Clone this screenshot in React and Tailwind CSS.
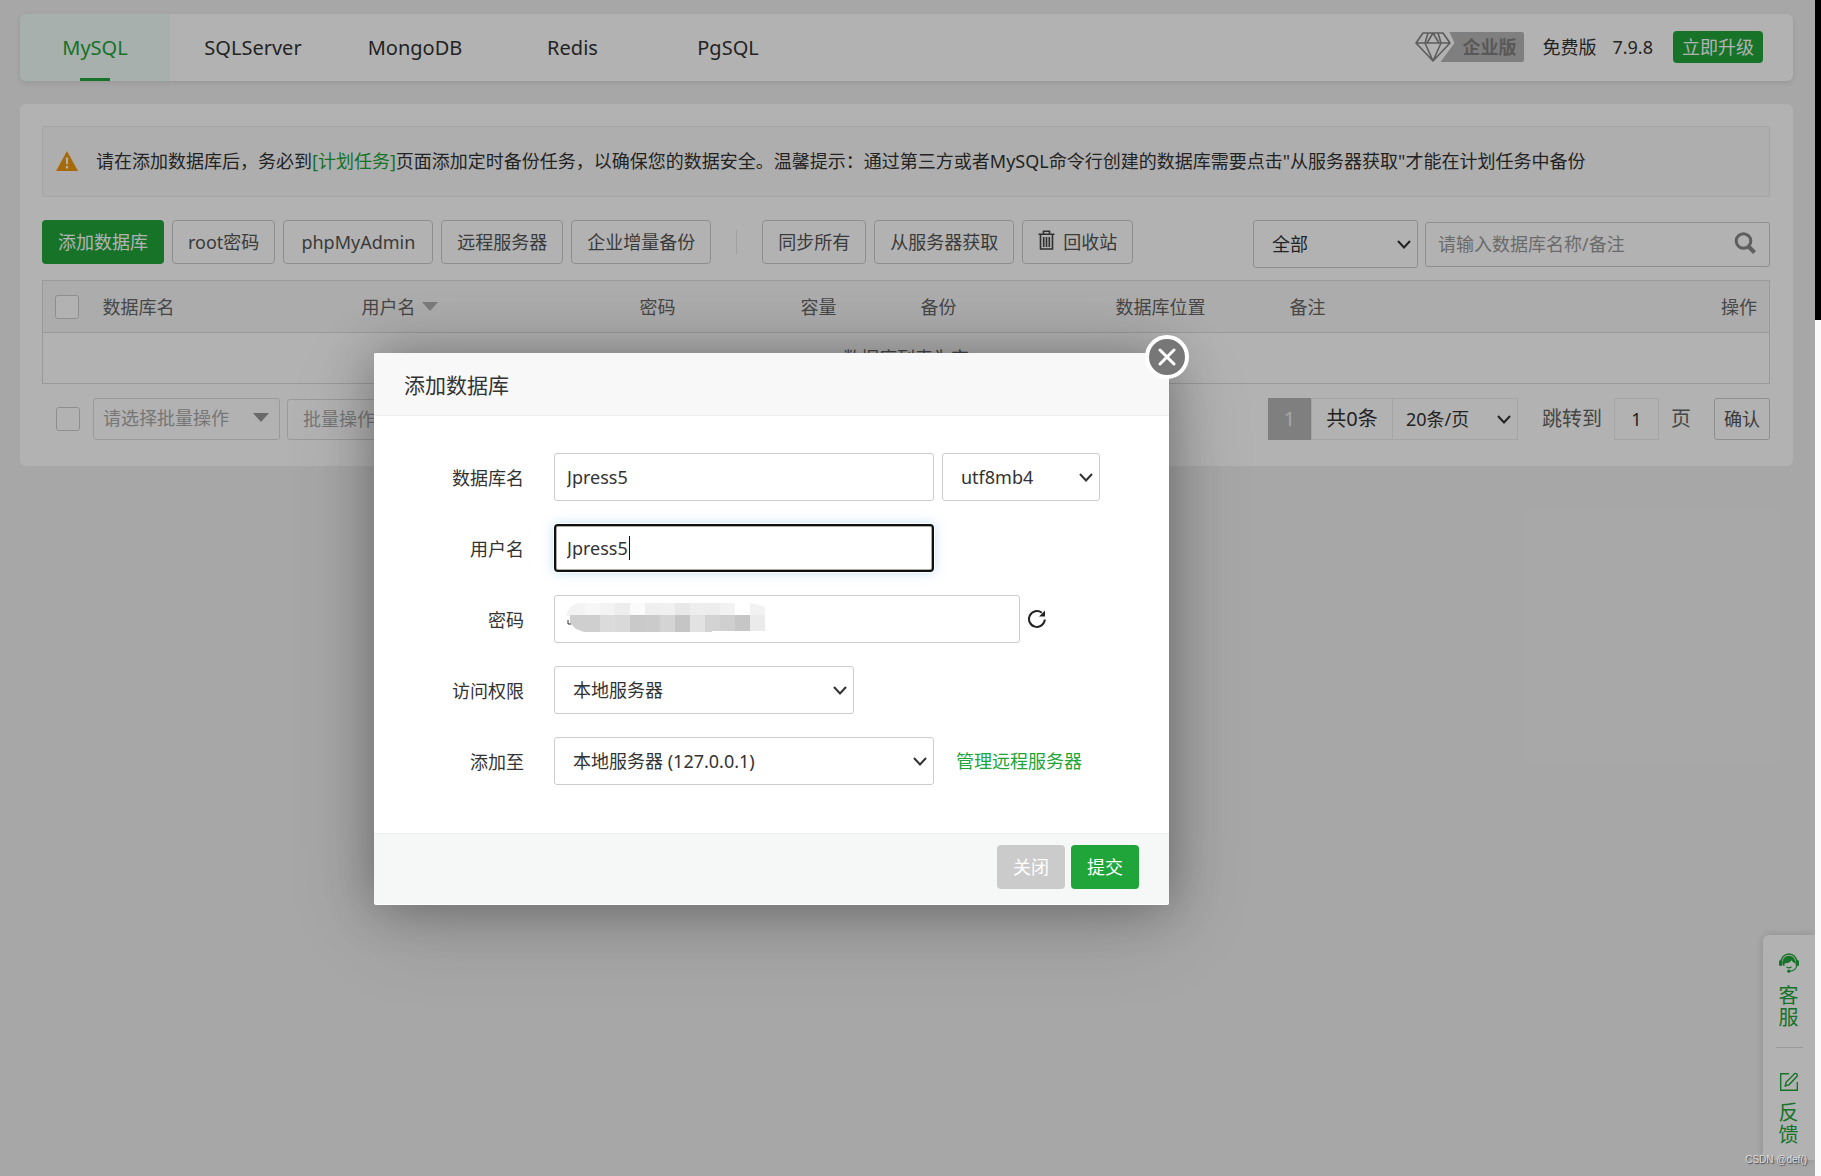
import React, { useState } from "react";

const TABS = [
  { name: "MySQL", width: "w-[150px]" },
  { name: "SQLServer", width: "w-[166px]" },
  { name: "MongoDB", width: "w-[158px]" },
  { name: "Redis", width: "w-[157px]" },
  { name: "PgSQL", width: "w-[154px]" },
];

const MOSAIC_TOP = ["#f3f3f3", "#f7f7f7", "#f3f3f3", "#ededed", "#fbfbfb", "#efefef", "#f0f0f0", "#e8e8e8", "#eeeeee", "#ededed", "#f2f2f2", "#ffffff", "#f2f2f2"];
const MOSAIC_BOTTOM = ["#cfcfcf", "#dbdbdb", "#d9d9d9", "#c9c9c9", "#cbcbcb", "#d4d4d4", "#c5c5c5", "#e2e2e2", "#d3d3d3", "#cfcfcf", "#c6c6c6", "#ebebeb"];

const Chevron = () => (
  <svg viewBox="0 0 14 9" className="pointer-events-none absolute right-[7px] top-1/2 -mt-1 h-[9px] w-[14px]" fill="none" stroke="#333" strokeWidth="2">
    <path d="M1 1l6 6.5L13 1" />
  </svg>
);

const Caret = ({ className }) => (
  <svg viewBox="0 0 16 9" className={"h-[9px] w-4 " + className} fill="currentColor">
    <path d="M0 0h16L8 9z" />
  </svg>
);

const Select = ({ id, label, options, className }) => (
  <div className={"relative shrink-0 " + className}>
    <select
      id={id}
      aria-label={label}
      className="h-full w-full appearance-none rounded-[3px] border border-[#ccc] bg-white pl-[18px] text-[#333]"
    >
      {options.map((item) => (
        <option key={item}>{item}</option>
      ))}
    </select>
    <Chevron />
  </div>
);

const ToolButton = ({ children, className = "" }) => (
  <button className={"flex h-11 items-center justify-center rounded border border-[#ccc] bg-white px-[15px] whitespace-nowrap text-[#555] " + className}>
    {children}
  </button>
);

const Checkbox = ({ label }) => (
  <input type="checkbox" aria-label={label} className="block h-6 w-6 shrink-0 appearance-none rounded-[3px] border border-[#ccc] bg-white" />
);

const TrashIcon = () => (
  <svg viewBox="0 0 16 20" className="mr-2 mb-1 h-5 w-[17px]" fill="none" stroke="#444" strokeWidth="1.6">
    <path d="M0 4.2h16M5 4V1.2h6V4M2 4.5V19h12V4.5M5.2 7v10M8 7v10M10.8 7v10" />
  </svg>
);

const Header = () => (
  <header className="flex h-[67px] items-center rounded-md bg-white shadow-[0_2px_6px_rgba(0,0,0,0.1)]">
    <nav className="flex h-full flex-1">
      {TABS.map((tab, i) => (
        <a
          key={tab.name}
          href="#"
          className={
            "relative flex h-full items-center justify-center text-xl " +
            tab.width +
            (i === 0 ? " rounded-l-md bg-[#f0fdf6] text-[#20a53a]" : " text-[#333]")
          }
        >
          {tab.name}
          {i === 0 && <span className="absolute bottom-0 left-1/2 -ml-[15px] h-[3px] w-[30px] bg-[#20a53a]" />}
        </a>
      ))}
    </nav>
    <div className="flex items-center pr-[30px] pb-px text-[#333]">
      <svg viewBox="0 0 36 30" className="h-[30px] w-9" fill="none" stroke="#858585" strokeWidth="1.6" strokeLinejoin="round">
        <path d="M8 1h20l7 10L18 29 1 11zM1 11h34M13 1l-3 10 8 18 8-18-3-10M18 1l-6 10M18 1l6 10" />
      </svg>
      <span className="-ml-[11px] flex h-[30px] w-[84px] items-center justify-end rounded-xs bg-[#b7b7b7] pr-[8px] font-bold text-[#7f7f7f] [clip-path:polygon(9px_0,100%_0,100%_100%,0_100%,14px_11px)]">
        企业版
      </span>
      <span className="ml-[18px]">免费版</span>
      <span className="ml-4">7.9.8</span>
      <button className="ml-[20px] flex h-8 w-[90px] items-center justify-center rounded bg-[#20a53a] text-white">立即升级</button>
    </div>
  </header>
);

const Notice = () => (
  <div className="flex h-[71px] items-center rounded-xs border border-[#ebebeb] bg-[#fafafa] pb-px pl-[13px] text-[#333]">
    <svg viewBox="0 0 22 20" className="mr-[18px] h-5 w-[22px]">
      <path d="M11 0l11 20H0z" fill="#f0990f" />
      <path d="M9.8 6.5h2.4l-.4 7h-1.6zM9.9 15h2.2v2.4H9.9z" fill="#fff" />
    </svg>
    <p className="whitespace-nowrap">
      请在添加数据库后，务必到
      <a href="#" className="text-[#20a53a]">[计划任务]</a>
      页面添加定时备份任务，以确保您的数据安全。温馨提示：通过第三方或者MySQL命令行创建的数据库需要点击"从服务器获取"才能在计划任务中备份
    </p>
  </div>
);

const Toolbar = () => (
  <div className="mt-[23px] flex items-start">
    <div className="flex flex-1 gap-2">
      <button className="h-11 rounded bg-[#20a53a] px-4 text-white">添加数据库</button>
      <ToolButton>root密码</ToolButton>
      <ToolButton className="min-w-[150px]">phpMyAdmin</ToolButton>
      <ToolButton>远程服务器</ToolButton>
      <ToolButton>企业增量备份</ToolButton>
      <span className="mx-[17px] mt-[10px] h-6 w-px bg-[#e6e6e6]" />
      <ToolButton>同步所有</ToolButton>
      <ToolButton>从服务器获取</ToolButton>
      <ToolButton>
        <TrashIcon />
        回收站
      </ToolButton>
    </div>
    <Select label="数据库类型" options={["全部"]} className="h-12 w-[165px]" />
    <div className="relative ml-[7px] self-center">
      <input
        type="text"
        aria-label="搜索数据库"
        placeholder="请输入数据库名称/备注"
        className="block h-[45px] w-[345px] rounded-[3px] border border-[#ccc] bg-white px-3 placeholder:text-[#999]"
      />
      <svg viewBox="0 0 22 22" className="absolute top-[10px] right-[14px] h-[22px] w-[22px]" fill="none" stroke="#888">
        <circle cx="9.5" cy="9" r="7.3" strokeWidth="3" />
        <path d="M14.5 14.5l6 6" strokeWidth="4" />
      </svg>
    </div>
  </div>
);

const DatabaseTable = () => (
  <table className="mt-3 w-full table-fixed border border-[#ddd] text-[#666]">
    <thead>
      <tr className="h-[52px] bg-[#f6f6f6] text-left [&>th]:pl-[10px] [&>th]:font-normal">
        <th className="w-[50px]">
          <div className="pl-[2px]">
            <Checkbox label="全选" />
          </div>
        </th>
        <th className="w-[259px]">数据库名</th>
        <th className="w-[278px]">
          <span className="flex items-center gap-[6px]">
            用户名
            <Caret className="text-[#b0b0b0]" />
          </span>
        </th>
        <th className="w-[161px]">密码</th>
        <th className="w-[120px]">容量</th>
        <th className="w-[195px]">备份</th>
        <th className="w-[174px]">数据库位置</th>
        <th>备注</th>
        <th className="pr-3 text-right">操作</th>
      </tr>
    </thead>
    <tbody>
      <tr className="h-[51px] border-t border-[#ddd]">
        <td colSpan={9} className="text-center">数据库列表为空</td>
      </tr>
    </tbody>
  </table>
);

const TableFooter = () => (
  <div className="mt-[14px] flex items-start">
    <div className="flex h-[42px] flex-1 items-center pl-[14px]">
      <Checkbox label="选择全部" />
      <div className="relative ml-[13px] h-[42px] w-[187px]">
        <select aria-label="批量操作" className="h-full w-full appearance-none rounded-[3px] border border-[#ddd] bg-white pb-[2px] pl-[9px] text-[#aaa]">
          <option>请选择批量操作</option>
        </select>
        <Caret className="pointer-events-none absolute top-[15px] right-[11px] text-[#999]" />
      </div>
      <button className="ml-[7px] h-[41px] rounded-[3px] border border-[#ddd] px-[15px] text-[#aaa]">批量操作</button>
    </div>
    <div className="flex h-[42px] items-center text-[#333]">
      <span className="flex h-full w-[43px] items-center justify-center bg-[#b7b7b7] text-xl text-[#eee]">1</span>
      <span className="flex h-full w-[82px] items-center justify-center border border-[#ececec] text-xl">共0条</span>
      <div className="relative -ml-px h-full w-[126px]">
        <select aria-label="每页条数" className="h-full w-full appearance-none border border-[#ececec] bg-white pl-[13px]">
          <option>20条/页</option>
        </select>
        <Chevron />
      </div>
      <label htmlFor="jump" className="ml-6 text-xl text-[#666]">跳转到</label>
      <input id="jump" type="text" defaultValue="1" className="ml-3 h-full w-[45px] border border-[#ececec] bg-white text-center" />
      <span className="ml-3 text-xl text-[#666]">页</span>
      <button className="ml-[23px] h-full rounded-[3px] border border-[#ccc] px-[9px] text-[#555]">确认</button>
    </div>
  </div>
);

const SideBar = () => (
  <aside className="absolute right-0 bottom-4 flex h-[225px] w-[52px] flex-col items-center rounded-l-md bg-white text-xl leading-[22px] text-[#20a53a] shadow-[0_0_8px_rgba(0,0,0,0.15)]">
    <a href="#" className="flex flex-col items-center pt-[18px] pr-px">
      <svg viewBox="0 0 20 20" className="mb-3 h-5 w-5" fill="none" stroke="currentColor">
        <path d="M2.2 9a7.8 8 0 0 1 15.6 0" strokeWidth="1.4" />
        <path d="M3.5 10.5C3.5 5 6.5 2.8 10 2.8s6.5 2.2 6.5 7.7C14 9.6 13.5 8.5 12.8 7.2 11 9.6 8 10.5 5.5 10.5V13C4 13 3.5 12 3.5 10.5z" fill="currentColor" stroke="none" />
        <rect x="0" y="7" width="3.4" height="6" rx="1.5" fill="currentColor" stroke="none" />
        <rect x="16.6" y="7" width="3.4" height="6" rx="1.5" fill="currentColor" stroke="none" />
        <path d="M17.8 12.5c-.6 3.5-3.6 5.500-7.300 5.700M7.500 13.800c1.500 1.300 3.500 1.300 5 0" strokeWidth="1.2" />
        <circle cx="9.8" cy="18.2" r="1.6" fill="currentColor" stroke="none" />
      </svg>
      <span className="w-5">客服</span>
    </a>
    <span className="mt-[18px] h-px w-[27px] shrink-0 bg-[#ddd]" />
    <a href="#" className="flex flex-col items-center pt-6 pr-px">
      <svg viewBox="0 0 20 20" className="mb-[10px] h-5 w-5" fill="none" stroke="currentColor" strokeWidth="1.4">
        <path d="M10 1.7H1.7v16.6h16.6V10" />
        <path d="M6.2 14l1-4 8.3-8.3c1.8-1 3.6.8 2.6 2.6L10 12.8z" />
      </svg>
      <span className="w-5">反馈</span>
    </a>
  </aside>
);

const FormRow = ({ label, htmlFor, children }) => (
  <div className="flex h-12 items-center">
    <label htmlFor={htmlFor} className="w-[150px] shrink-0 pt-px text-right">{label}</label>
    <div className="ml-[30px] flex items-center">{children}</div>
  </div>
);

const AddDatabaseModal = () => {
  const [name, setName] = useState("Jpress5");
  const [username, setUsername] = useState("Jpress5");

  return (
    <section
      role="dialog"
      aria-labelledby="modal-title"
      className="relative w-[795px] rounded-xs bg-white pb-px text-[#333] shadow-[1px_1px_50px_rgba(0,0,0,0.3),0_20px_90px_rgba(0,0,0,0.15)]"
    >
      <h2 id="modal-title" className="flex h-[63px] items-center rounded-t-xs border-b border-[#eee] bg-[#f8f8f8] pt-[2px] pl-[30px] text-[21px]">
        添加数据库
      </h2>
      <button
        aria-label="关闭窗口"
        className="absolute -top-[18px] -right-[20px] flex h-11 w-11 items-center justify-center rounded-full border-4 border-white bg-[#777]"
      >
        <svg viewBox="0 0 18 18" className="h-[18px] w-[18px]" stroke="#fff" strokeWidth="3" strokeLinecap="round">
          <path d="M2 2l14 14M16 2L2 16" />
        </svg>
      </button>

      <form className="flex flex-col gap-[23px] pt-[37px] pb-12">
        <FormRow label="数据库名" htmlFor="db-name">
          <input
            id="db-name"
            type="text"
            value={name}
            onChange={(e) => setName(e.target.value)}
            className="h-12 w-[380px] rounded-[3px] border border-[#ccc] px-3"
          />
          <Select label="编码" options={["utf8mb4"]} className="ml-2 h-12 w-[158px]" />
        </FormRow>

        <FormRow label="用户名" htmlFor="db-user">
          <div className="relative">
            <input
              id="db-user"
              type="text"
              value={username}
              onChange={(e) => setUsername(e.target.value)}
              className="block h-12 w-[380px] rounded border-2 border-[#101010] px-[11px] shadow-[inset_0_0_0_1px_#aaa,0_0_0_1px_#fff,0_0_12px_rgba(102,175,233,0.45)] outline-none"
            />
            <span className="absolute top-3 left-[75px] h-6 w-px bg-[#111]" />
          </div>
        </FormRow>

        <FormRow label="密码" htmlFor="db-pass">
          <div className="relative">
            <input id="db-pass" type="password" className="block h-12 w-[466px] rounded-[3px] border border-[#ccc] px-3" />
            <svg viewBox="0 0 200 30" className="pointer-events-none absolute top-2 left-3 h-[30px] w-[200px]">
              <clipPath id="smudge">
                <path d="M12 0h173l14 4v24h-53v1H18L10 26 4 20 0 12 4 4z" />
              </clipPath>
              <g clipPath="url(#smudge)" shapeRendering="crispEdges">
                {MOSAIC_TOP.map((color, i) => (
                  <rect key={i} x={i === 0 ? 0 : i * 15 + 4} y="0" width={i === 0 ? 19 : 15} height="13" fill={color} />
                ))}
                {MOSAIC_BOTTOM.map((color, i) => (
                  <rect key={i} x={i === 0 ? 4 : i * 15 + 19} y="12" width={i === 0 ? 30 : 15} height="17" fill={color} />
                ))}
              </g>
              <path d="M2 17v4h3" fill="none" stroke="#333" />
            </svg>
          </div>
          <button type="button" aria-label="随机密码" className="ml-2">
            <svg viewBox="0 0 18 18" className="h-[18px] w-[18px]" fill="none" stroke="#222" strokeWidth="2">
              <path d="M16.8 9.5A7.9 7.9 0 1 1 13.8 2.8" />
              <path d="M17 .5v6h-6z" fill="#222" stroke="none" />
            </svg>
          </button>
        </FormRow>

        <FormRow label="访问权限" htmlFor="db-access">
          <Select id="db-access" options={["本地服务器"]} className="h-12 w-[300px]" />
        </FormRow>

        <FormRow label="添加至" htmlFor="db-server">
          <Select id="db-server" options={["本地服务器 (127.0.0.1)"]} className="h-12 w-[380px]" />
          <a href="#" className="ml-[22px] text-[#20a53a]">管理远程服务器</a>
        </FormRow>
      </form>

      <div className="flex h-[71px] items-center justify-end gap-[6px] border-t border-[#eef0f0] bg-[#f6f8f8] pr-[30px] pb-1">
        <button className="h-11 w-[68px] rounded bg-[#cbcbcb] text-white">关闭</button>
        <button className="h-11 w-[68px] rounded bg-[#20a53a] text-white">提交</button>
      </div>
    </section>
  );
};

const App = () => {
  return (
    <div className="flex min-h-screen font-['Noto_Sans','Noto_Sans_CJK_SC',sans-serif] text-lg leading-6">
      <div className="relative min-w-0 flex-1 overflow-hidden bg-[#f0f0f0]">
        <div className="pt-[14px] pr-[22px] pl-5">
          <Header />
          <main className="mt-[23px] rounded-md bg-white pt-[22px] pr-[23px] pb-[26px] pl-[22px]">
            <Notice />
            <Toolbar />
            <DatabaseTable />
            <TableFooter />
          </main>
        </div>
        <SideBar />

        <div className="absolute inset-0 flex items-start justify-center bg-black/30 pt-[353px] pr-[272px]">
          <AddDatabaseModal />
        </div>
        <span className="absolute right-2 bottom-2 font-['Liberation_Sans',sans-serif] text-[10px] leading-4 text-[#ddd] [text-shadow:1px_1px_1px_#444]">
          CSDN @def()
        </span>
      </div>

      <div className="w-[6px] shrink-0 bg-[#fafafa]">
        <div className="h-80 bg-black" />
      </div>
    </div>
  );
};

export default App;
